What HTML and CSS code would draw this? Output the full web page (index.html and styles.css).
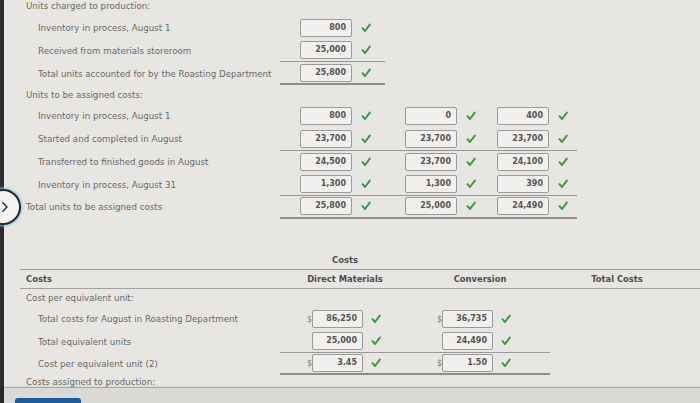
FILE: index.html
```html
<!DOCTYPE html>
<html lang="en">
<head>
<meta charset="utf-8">
<title>Roasting Department</title>
<link rel="stylesheet" href="styles.css">
</head>
<body>
<div class="screen">
  <div class="bezel"></div>
  <div class="main">
    <div class="content">
      <section class="units">
        <div class="title-row">Units charged to production:</div>
        <div class="row">
          <div class="label indent">Inventory in process, August 1</div>
          <div class="cell"><span class="box">800</span><svg class="check" viewBox="0 0 10 10"><path d="M1.5 5.2 L4 8 L8.8 1.6"/></svg></div>
        </div>
        <div class="row">
          <div class="label indent">Received from materials storeroom</div>
          <div class="cell rule"><span class="box">25,000</span><svg class="check" viewBox="0 0 10 10"><path d="M1.5 5.2 L4 8 L8.8 1.6"/></svg></div>
        </div>
        <div class="row">
          <div class="label indent">Total units accounted for by the Roasting Department</div>
          <div class="cell dbl"><span class="box">25,800</span><svg class="check" viewBox="0 0 10 10"><path d="M1.5 5.2 L4 8 L8.8 1.6"/></svg></div>
        </div>
        <div class="title-row">Units to be assigned costs:</div>
        <div class="row r2">
          <div class="label indent">Inventory in process, August 1</div>
          <div class="cell"><span class="box">800</span><svg class="check" viewBox="0 0 10 10"><path d="M1.5 5.2 L4 8 L8.8 1.6"/></svg></div>
          <div class="cell"><span class="box">0</span><svg class="check" viewBox="0 0 10 10"><path d="M1.5 5.2 L4 8 L8.8 1.6"/></svg></div>
          <div class="cell"><span class="box">400</span><svg class="check" viewBox="0 0 10 10"><path d="M1.5 5.2 L4 8 L8.8 1.6"/></svg></div>
        </div>
        <div class="row r2">
          <div class="label indent">Started and completed in August</div>
          <div class="cell rule"><span class="box">23,700</span><svg class="check" viewBox="0 0 10 10"><path d="M1.5 5.2 L4 8 L8.8 1.6"/></svg></div>
          <div class="cell rule"><span class="box">23,700</span><svg class="check" viewBox="0 0 10 10"><path d="M1.5 5.2 L4 8 L8.8 1.6"/></svg></div>
          <div class="cell rule"><span class="box">23,700</span><svg class="check" viewBox="0 0 10 10"><path d="M1.5 5.2 L4 8 L8.8 1.6"/></svg></div>
        </div>
        <div class="row r2">
          <div class="label indent">Transferred to finished goods in August</div>
          <div class="cell"><span class="box">24,500</span><svg class="check" viewBox="0 0 10 10"><path d="M1.5 5.2 L4 8 L8.8 1.6"/></svg></div>
          <div class="cell"><span class="box">23,700</span><svg class="check" viewBox="0 0 10 10"><path d="M1.5 5.2 L4 8 L8.8 1.6"/></svg></div>
          <div class="cell"><span class="box">24,100</span><svg class="check" viewBox="0 0 10 10"><path d="M1.5 5.2 L4 8 L8.8 1.6"/></svg></div>
        </div>
        <div class="row r2">
          <div class="label indent">Inventory in process, August 31</div>
          <div class="cell rule"><span class="box">1,300</span><svg class="check" viewBox="0 0 10 10"><path d="M1.5 5.2 L4 8 L8.8 1.6"/></svg></div>
          <div class="cell rule"><span class="box">1,300</span><svg class="check" viewBox="0 0 10 10"><path d="M1.5 5.2 L4 8 L8.8 1.6"/></svg></div>
          <div class="cell rule"><span class="box">390</span><svg class="check" viewBox="0 0 10 10"><path d="M1.5 5.2 L4 8 L8.8 1.6"/></svg></div>
        </div>
        <div class="row r2">
          <div class="label">Total units to be assigned costs</div>
          <div class="cell dbl"><span class="box">25,800</span><svg class="check" viewBox="0 0 10 10"><path d="M1.5 5.2 L4 8 L8.8 1.6"/></svg></div>
          <div class="cell dbl"><span class="box">25,000</span><svg class="check" viewBox="0 0 10 10"><path d="M1.5 5.2 L4 8 L8.8 1.6"/></svg></div>
          <div class="cell dbl"><span class="box">24,490</span><svg class="check" viewBox="0 0 10 10"><path d="M1.5 5.2 L4 8 L8.8 1.6"/></svg></div>
        </div>
      </section>

      <section class="costs">
        <div class="super-head">
          <div></div>
          <div class="head-cell">Costs</div>
        </div>
        <div class="head-row">
          <div class="head-label">Costs</div>
          <div class="head-cell">Direct Materials</div>
          <div class="head-cell">Conversion</div>
          <div class="head-cell">Total Costs</div>
        </div>
        <div class="crow first">
          <div class="label">Cost per equivalent unit:</div>
        </div>
        <div class="crow">
          <div class="label indent">Total costs for August in Roasting Department</div>
          <div class="ccell"><span class="dollar">$</span><span class="box">86,250</span><svg class="check" viewBox="0 0 10 10"><path d="M1.5 5.2 L4 8 L8.8 1.6"/></svg></div>
          <div class="ccell"><span class="dollar">$</span><span class="box">36,735</span><svg class="check" viewBox="0 0 10 10"><path d="M1.5 5.2 L4 8 L8.8 1.6"/></svg></div>
        </div>
        <div class="crow">
          <div class="label indent">Total equivalent units</div>
          <div class="ccell rule"><span class="dollar blank">$</span><span class="box">25,000</span><svg class="check" viewBox="0 0 10 10"><path d="M1.5 5.2 L4 8 L8.8 1.6"/></svg></div>
          <div class="ccell rule"><span class="dollar blank">$</span><span class="box">24,490</span><svg class="check" viewBox="0 0 10 10"><path d="M1.5 5.2 L4 8 L8.8 1.6"/></svg></div>
        </div>
        <div class="crow">
          <div class="label indent">Cost per equivalent unit (2)</div>
          <div class="ccell dbl"><span class="dollar">$</span><span class="box">3.45</span><svg class="check" viewBox="0 0 10 10"><path d="M1.5 5.2 L4 8 L8.8 1.6"/></svg></div>
          <div class="ccell dbl"><span class="dollar">$</span><span class="box">1.50</span><svg class="check" viewBox="0 0 10 10"><path d="M1.5 5.2 L4 8 L8.8 1.6"/></svg></div>
        </div>
        <div class="crow last">
          <div class="label">Costs assigned to production:</div>
        </div>
      </section>
    </div>
    <div class="footer"><span class="blue-btn"></span></div>
  </div>
  <button class="nav-btn" aria-label="Next"><svg viewBox="0 0 12 18"><path d="M2 2 L9 9 L2 16"/></svg></button>
</div>
</body>
</html>
```

FILE: styles.css
```css
html, body {
  margin: 0;
  padding: 0;
}

body {
  background: #e7e5e2;
}

.screen {
  position: relative;
  width: 700px;
  height: 403px;
  overflow: hidden;
  display: flex;
  background: #e8e6e3;
  font-family: "DejaVu Sans", Verdana, sans-serif;
  color: #6a6967;
}

.bezel {
  width: 4px;
  flex: none;
  background: #2b2b2d;
}

.main {
  flex: 1;
  display: flex;
  flex-direction: column;
  min-width: 0;
}

.content {
  flex: 1;
  overflow: hidden;
  padding-left: 22px;
}

/* ---------- units section ---------- */
.units {
  margin-top: -4px;
}

.title-row {
  height: 20px;
  line-height: 20px;
  font-size: 8.7px;
}

.row {
  display: grid;
  grid-template-columns: 254px 105px 92px 100px;
  height: 23px;
  align-items: stretch;
}

.row.r2 {
  height: 22.75px;
}

.label {
  display: flex;
  align-items: center;
  font-size: 8.7px;
  white-space: nowrap;
}

.label.indent {
  padding-left: 12px;
}

.cell {
  display: flex;
  align-items: center;
  padding-left: 20px;
  gap: 9px;
  box-sizing: border-box;
}

.rule {
  border-bottom: 1px solid #9a9896;
}

.dbl {
  border-bottom: 2px solid #8e8c8a;
}

.box {
  box-sizing: border-box;
  display: inline-block;
  width: 52px;
  height: 18px;
  line-height: 16px;
  border: 1px solid #9c9a98;
  border-radius: 2px;
  background: #f1f0ee;
  text-align: right;
  padding-right: 5px;
  font-size: 8px;
  font-weight: bold;
  color: #555452;
  flex: none;
}

.check {
  width: 10px;
  height: 10px;
  flex: none;
}

.check path {
  fill: none;
  stroke: #3c9a3f;
  stroke-width: 2;
  stroke-linecap: round;
  stroke-linejoin: round;
}

/* ---------- costs section ---------- */
.costs {
  margin-top: 32px;
  margin-left: -6px;
}

.super-head,
.head-row,
.crow {
  display: grid;
  grid-template-columns: 260px 130px 140px 134px;
}

.super-head {
  height: 18px;
  border-bottom: 1px solid #a3a19f;
}

.head-row {
  height: 18px;
  border-bottom: 1px solid #a3a19f;
}

.head-cell,
.head-label {
  display: flex;
  align-items: center;
  justify-content: center;
  font-size: 8.4px;
  font-weight: bold;
  color: #4e4d4b;
  white-space: nowrap;
}

.head-label {
  justify-content: flex-start;
  padding-left: 6px;
}

.crow {
  height: 22.5px;
  padding-left: 6px;
  grid-template-columns: 254px 130px 140px 134px;
}

.crow.first {
  height: 19px;
}

.crow.last {
  height: 13px;
}

.ccell {
  display: flex;
  align-items: center;
  padding-left: 27px;
  box-sizing: border-box;
}

.ccell .box {
  width: 51px;
}

.ccell .check {
  margin-left: 8px;
}

.dollar {
  width: 5px;
  font-size: 8px;
  color: #7a7876;
  flex: none;
}

.dollar.blank {
  visibility: hidden;
}

/* ---------- footer ---------- */
.footer {
  height: 15px;
  flex: none;
  background: #dbd9d6;
  border-top: 1px solid #a9a7a5;
  box-shadow: 0 -1px 2px rgba(0, 0, 0, 0.08);
  position: relative;
  padding-left: 11px;
  display: flex;
  align-items: flex-end;
}

.blue-btn {
  display: block;
  width: 66px;
  height: 5px;
  background: #1d5c9c;
  border-radius: 3px 3px 0 0;
}

/* ---------- nav button overlay ---------- */
.nav-btn {
  position: absolute;
  left: -15px;
  top: 189px;
  width: 36px;
  height: 36px;
  border-radius: 50%;
  border: 2px solid #1f2b34;
  background: #f4f4f3;
  box-shadow: 0 0 3px 1px #8cc3e0;
  padding: 0;
  display: flex;
  align-items: center;
  justify-content: flex-end;
  padding-right: 10px;
  box-sizing: border-box;
}

.nav-btn svg {
  width: 8px;
  height: 14px;
}

.nav-btn path {
  fill: none;
  stroke: #1f2b34;
  stroke-width: 2;
}
```
